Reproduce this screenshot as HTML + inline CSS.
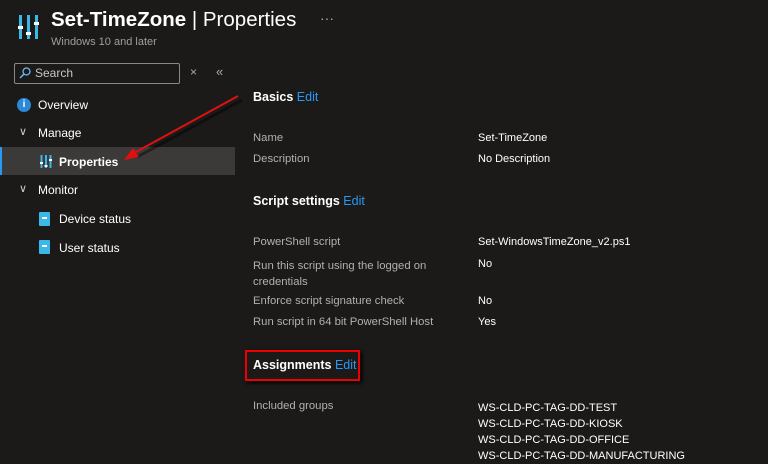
<html><head><style>
body{margin:0;width:768px;height:459px;background:#1b1a19;font-family:"Liberation Sans",sans-serif;color:#fff;position:relative;overflow:hidden}
.a{position:absolute;white-space:nowrap}
.l{color:#b3b0ad;font-size:11.3px}
.v{color:#fff;font-size:11px}
.h{font-size:12.5px;font-weight:bold}
.e{color:#2899f5;font-weight:normal}
.n{font-size:12px;color:#fff}
</style></head><body>
<svg class="a" style="left:18px;top:13px" width="24" height="28"><g fill="#3ab9e8"><rect x="1" y="2" width="3" height="24"/><rect x="9" y="2" width="3" height="24"/><rect x="17" y="2" width="3" height="24"/></g><g fill="#fff"><rect x="0" y="13" width="5" height="3"/><rect x="8" y="19" width="5" height="3"/><rect x="16" y="9" width="5" height="3"/></g></svg>
<div class="a" style="left:51px;top:8px;font-size:20.5px"><b>Set-TimeZone</b> | Properties</div>
<div class="a" style="left:320px;top:10px;color:#aaa;font-size:14px">···</div>
<div class="a" style="left:51px;top:36px;font-size:11px;color:#a19f9d">Windows 10 and later</div>
<div class="a" style="left:14px;top:63px;width:164px;height:19px;border:1px solid #8a8886;border-radius:2px"></div>
<svg class="a" style="left:19px;top:67px" width="12" height="12"><circle cx="7.5" cy="4.5" r="3.5" stroke="#6cb8f6" fill="none" stroke-width="1.3"/><line x1="5" y1="7" x2="1" y2="11" stroke="#6cb8f6" stroke-width="1.5"/></svg>
<div class="a" style="left:35px;top:66px;font-size:12px;color:#c8c6c4">Search</div>
<div class="a" style="left:190px;top:65px;font-size:12px;color:#aaa">×</div>
<div class="a" style="left:216px;top:64px;font-size:13px;color:#aaa">«</div>
<div class="a" style="left:17px;top:98px;width:14px;height:14px;border-radius:50%;background:#2b88d8;color:#fff;font-size:10px;font-weight:bold;text-align:center;line-height:14px">i</div>
<div class="a n" style="left:38px;top:98px">Overview</div>
<div class="a" style="left:19px;top:125px;font-size:11px;color:#ccc">∨</div>
<div class="a n" style="left:38px;top:126px">Manage</div>
<div class="a" style="left:0;top:147px;width:235px;height:28px;background:#3b3a39;border-left:2px solid #2899f5;box-sizing:border-box"></div>
<svg class="a" style="left:40px;top:155px" width="12" height="13"><g fill="#3ab9e8"><rect x="0.5" y="0" width="2" height="13"/><rect x="5" y="0" width="2" height="13"/><rect x="9.5" y="0" width="2" height="13"/></g><g fill="#fff"><rect x="0" y="7" width="3" height="2"/><rect x="4.5" y="10" width="3" height="2"/><rect x="9" y="4" width="3" height="2"/></g></svg>
<div class="a n" style="left:59px;top:155px;font-weight:bold">Properties</div>
<div class="a" style="left:19px;top:182px;font-size:11px;color:#ccc">∨</div>
<div class="a n" style="left:38px;top:183px">Monitor</div>
<div class="a" style="left:39px;top:212px;width:11px;height:14px;background:#3ab9e8;border-radius:1px"><div style="margin:5px 3px;height:2px;background:#fff"></div></div>
<div class="a n" style="left:59px;top:212px">Device status</div>
<div class="a" style="left:39px;top:240px;width:11px;height:14px;background:#3ab9e8;border-radius:1px"><div style="margin:5px 3px;height:2px;background:#fff"></div></div>
<div class="a n" style="left:59px;top:241px">User status</div>

<div class="a h" style="left:253px;top:90px">Basics <span class="e">Edit</span></div>
<div class="a l" style="left:253px;top:132px">Name</div><div class="a v" style="left:478px;top:132px">Set-TimeZone</div>
<div class="a l" style="left:253px;top:153px">Description</div><div class="a v" style="left:478px;top:153px">No Description</div>
<div class="a h" style="left:253px;top:194px">Script settings <span class="e">Edit</span></div>
<div class="a l" style="left:253px;top:236px">PowerShell script</div><div class="a v" style="left:478px;top:236px">Set-WindowsTimeZone_v2.ps1</div>
<div class="a l" style="left:253px;top:258px;line-height:16px">Run this script using the logged on<br>credentials</div><div class="a v" style="left:478px;top:258px">No</div>
<div class="a l" style="left:253px;top:295px">Enforce script signature check</div><div class="a v" style="left:478px;top:295px">No</div>
<div class="a l" style="left:253px;top:316px">Run script in 64 bit PowerShell Host</div><div class="a v" style="left:478px;top:316px">Yes</div>
<div class="a" style="left:245px;top:350px;width:111px;height:27px;border:2px solid #e00;box-shadow:2px 2px 4px #000"></div>
<div class="a h" style="left:253px;top:358px">Assignments <span class="e">Edit</span></div>
<div class="a l" style="left:253px;top:400px">Included groups</div>
<div class="a v" style="left:478px;top:400px;line-height:16px">WS-CLD-PC-TAG-DD-TEST<br>WS-CLD-PC-TAG-DD-KIOSK<br>WS-CLD-PC-TAG-DD-OFFICE<br>WS-CLD-PC-TAG-DD-MANUFACTURING</div>
<svg class="a" style="left:0;top:0" width="768" height="459"><line x1="240" y1="98" x2="135" y2="155" stroke="#000" stroke-opacity=".4" stroke-width="3" transform="translate(2,2)"/><line x1="238" y1="96" x2="134" y2="153" stroke="#e01010" stroke-width="2"/><polygon points="124,160 133,148 139,157" fill="#e01010"/></svg>
</body></html>
